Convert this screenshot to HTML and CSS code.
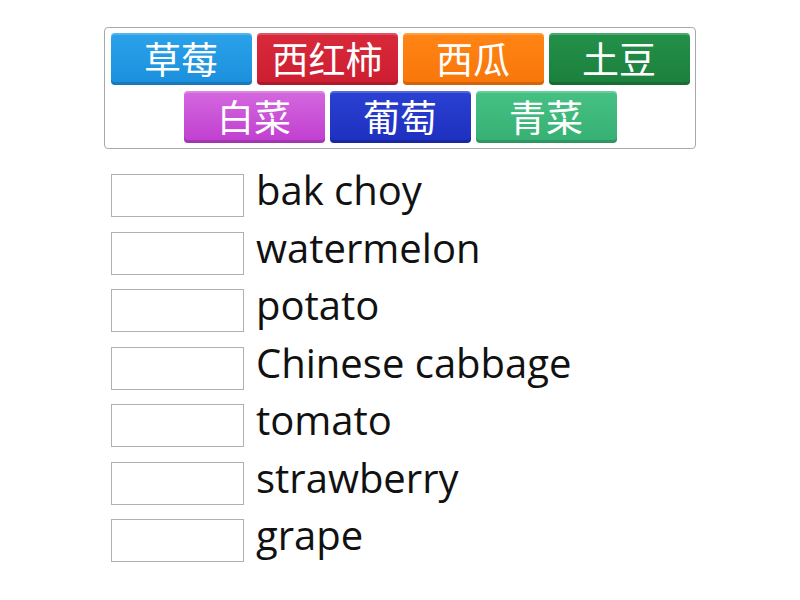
FILE: index.html
```html
<!DOCTYPE html>
<html lang="zh-CN">
<head>
  <meta charset="UTF-8">
  <title>Match up</title>
  <link rel="stylesheet" href="styles.css">
</head>
<body>

<div class="page">
  <div class="tiles">
    <div class="tile blue">草莓</div>
    <div class="tile red">西红柿</div>
    <div class="tile orange">西瓜</div>
    <div class="tile dgreen">土豆</div>
    <div class="tile purple">白菜</div>
    <div class="tile navy">葡萄</div>
    <div class="tile green">青菜</div>
  </div>

  <div class="rows">
    <div class="row"><span class="slot"></span><span class="word">bak choy</span></div>
    <div class="row"><span class="slot"></span><span class="word">watermelon</span></div>
    <div class="row"><span class="slot"></span><span class="word">potato</span></div>
    <div class="row"><span class="slot"></span><span class="word">Chinese cabbage</span></div>
    <div class="row"><span class="slot"></span><span class="word">tomato</span></div>
    <div class="row"><span class="slot"></span><span class="word">strawberry</span></div>
    <div class="row"><span class="slot"></span><span class="word">grape</span></div>
  </div>
</div>

</body>
</html>
```

FILE: styles.css
```css
body {
  margin: 0;
  background: #fff;
  font-family: "Open Sans", "Noto Sans CJK SC", sans-serif;
}
.page {
  width: 592px;
  margin: 27px auto 0;
}
.tiles {
  box-sizing: border-box;
  display: flex;
  flex-wrap: wrap;
  justify-content: center;
  gap: 6px 5px;
  padding: 5px;
  border: 1px solid #a8a8a8;
  border-radius: 4px;
}
.tile {
  box-sizing: border-box;
  width: 141px;
  height: 52px;
  border-radius: 4px;
  color: #fff;
  font-family: "Noto Sans CJK SC", sans-serif;
  font-size: 37px;
  line-height: 50px;
  text-align: center;
  box-shadow: inset 0 -3px 0 rgba(0,0,0,0.15), inset 0 2px 0 rgba(255,255,255,0.2);
}
.blue   { background: linear-gradient(#2ba2ea, #1b8fdc); }
.red    { background: linear-gradient(#d92a3c, #cc1e30); }
.orange { background: linear-gradient(#ff8514, #f8760a); }
.dgreen { background: linear-gradient(#23914a, #1c7f3d); }
.purple { background: linear-gradient(#d468de, #c03ed0); }
.navy   { background: linear-gradient(#2a41d2, #1e2fbf); }
.green  { background: linear-gradient(#46c184, #36b072); }

.rows {
  margin-top: 25px;
  padding-left: 7px;
  display: flex;
  flex-direction: column;
  gap: 14.5px;
}
.row {
  display: flex;
  align-items: center;
  gap: 12px;
  height: 43px;
}
.slot {
  box-sizing: border-box;
  width: 133px;
  height: 43px;
  border: 1px solid #b0b0b0;
  flex: none;
}
.word {
  font-size: 40px;
  color: #111;
  line-height: 43px;
  padding-bottom: 12px;
}
```
